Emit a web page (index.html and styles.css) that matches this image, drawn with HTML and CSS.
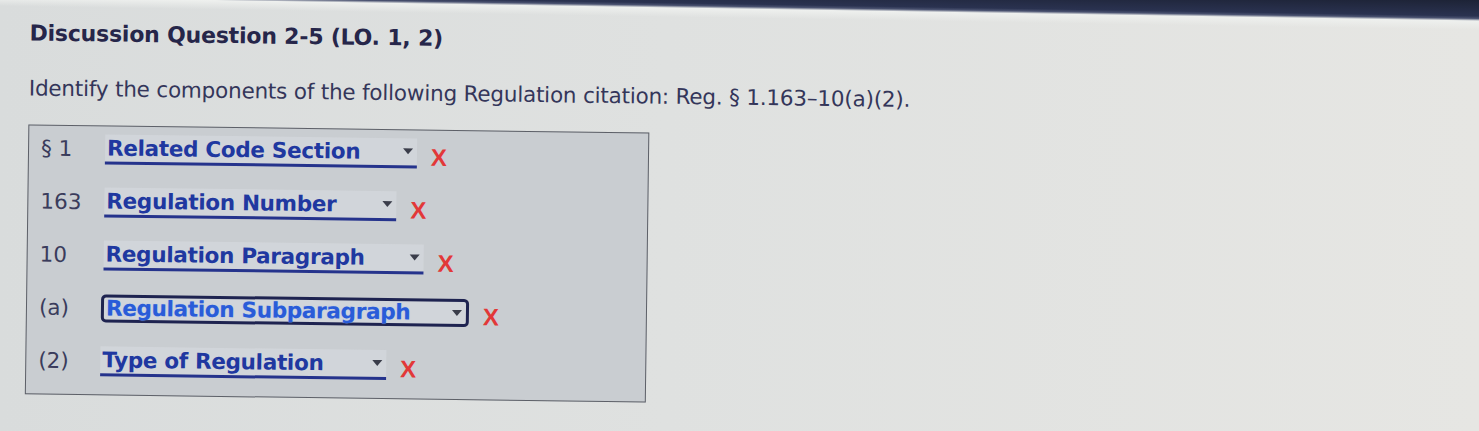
FILE: index.html
```html
<!DOCTYPE html>
<html lang="en">
<head>
<meta charset="utf-8">
<title>Discussion Question 2-5</title>
<link rel="stylesheet" href="styles.css">
</head>
<body>
<div class="page">
  <h1 class="title">Discussion Question 2-5 (LO. 1, 2)</h1>
  <p class="prompt">Identify the components of the following Regulation citation: Reg. § 1.163–10(a)(2).</p>
  <div class="box">
    <div class="row">
      <span class="label">§ 1</span>
      <span class="select w1"><span class="val">Related Code Section</span><span class="arrow"></span></span>
      <span class="mark">X</span>
    </div>
    <div class="row">
      <span class="label">163</span>
      <span class="select w2"><span class="val">Regulation Number</span><span class="arrow"></span></span>
      <span class="mark">X</span>
    </div>
    <div class="row">
      <span class="label">10</span>
      <span class="select w3"><span class="val">Regulation Paragraph</span><span class="arrow"></span></span>
      <span class="mark">X</span>
    </div>
    <div class="row">
      <span class="label">(a)</span>
      <span class="select w4 focused"><span class="val">Regulation Subparagraph</span><span class="arrow"></span></span>
      <span class="mark">X</span>
    </div>
    <div class="row">
      <span class="label">(2)</span>
      <span class="select w5"><span class="val">Type of Regulation</span><span class="arrow"></span></span>
      <span class="mark">X</span>
    </div>
  </div>
</div>
</body>
</html>
```
FILE: styles.css
```css
html, body {
  margin: 0;
  padding: 0;
}
body {
  width: 1479px;
  height: 431px;
  overflow: hidden;
  font-family: "DejaVu Sans", Verdana, sans-serif;
  color: #2e2f52;
  background:
    linear-gradient(180.93deg, #1d2336 0px, #2a3250 16px, #4a5270 18.5px, #eef0ee 21px, rgba(238,240,238,0) 30px),
    linear-gradient(90deg, #d9dcdc 0%, #dfe1e0 45%, #e6e6e3 100%);
}
.page {
  padding: 18px 0 0 30px;
  transform: rotate(0.75deg);
  transform-origin: 0 0;
}
.title {
  margin: 0;
  font-size: 22px;
  font-weight: bold;
  letter-spacing: -0.2px;
  line-height: 30px;
  color: #26264a;
}
.prompt {
  margin: 26px 0 0 0;
  font-size: 21.5px;
  line-height: 28px;
  letter-spacing: -0.2px;
  color: #34365a;
}
.box {
  margin: 22px 0 0 0;
  width: 621px;
  height: 270px;
  box-sizing: border-box;
  border: 1.5px solid #5d6068;
  background: #c9cdd1;
  padding: 0 0 0 12px;
  display: flex;
  flex-direction: column;
}
.row {
  height: 53px;
  flex: none;
  display: flex;
  align-items: center;
}
.row:first-child {
  margin-top: -4px;
}
.label {
  width: 64px;
  flex: none;
  font-size: 21.5px;
  color: #3a3c5c;
}
.select {
  height: 30px;
  box-sizing: border-box;
  display: flex;
  align-items: center;
  justify-content: space-between;
  border-bottom: 3px solid #25338c;
  padding: 0 4px 0 2px;
  background: rgba(215, 219, 224, 0.6);
}
.val {
  font-size: 21.5px;
  font-weight: bold;
  letter-spacing: -0.3px;
  color: #2038a0;
  white-space: nowrap;
}
.arrow {
  width: 0;
  height: 0;
  border-left: 5px solid transparent;
  border-right: 5px solid transparent;
  border-top: 6px solid #3a3d4a;
  margin-left: 8px;
}
.w1 { width: 312px; }
.w2 { width: 292px; }
.w3 { width: 320px; }
.w4 { width: 368px; margin-left: -2px; }
.w5 { width: 286px; margin-left: -2px; }
.focused {
  border: 3px solid #1e2350;
  border-radius: 5px;
  height: 28px;
}
.focused .val {
  color: #2a5cd8;
  text-shadow: 0 0 1px #8fb0f0;
}
.mark {
  margin-left: 14px;
  font-family: "Liberation Sans", Arial, sans-serif;
  font-size: 24px;
  font-weight: bold;
  color: #e23838;
  position: relative;
  top: 4px;
}
```
